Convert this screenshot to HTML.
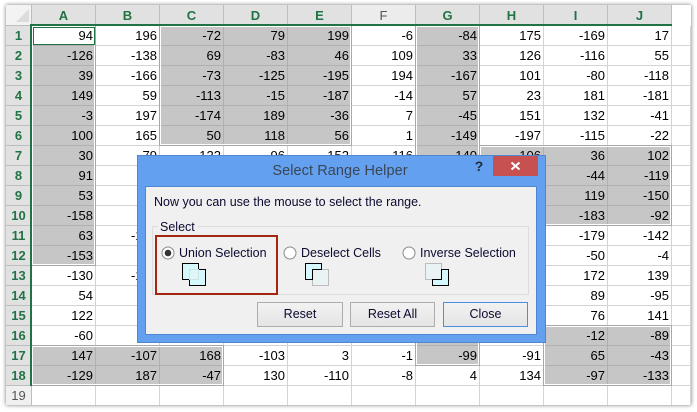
<!DOCTYPE html>
<html>
<head>
<meta charset="utf-8">
<style>
html,body{margin:0;padding:0;background:#fff;width:697px;height:412px;overflow:hidden}
body{position:relative;font-family:"Liberation Sans",sans-serif}
#sheet{position:absolute;left:6px;top:5px;width:685px;height:400px;background:#fff;box-shadow:0 0 4px rgba(0,0,0,.55);overflow:hidden}
table{position:absolute;left:0;top:0;border-collapse:separate;border-spacing:0;table-layout:fixed;width:685px;font-size:13px;color:#000}
td,th{box-sizing:border-box;height:20px;padding:0 2px 0 0;border-right:1px solid #d4d4d4;border-bottom:1px solid #d4d4d4;text-align:right;line-height:19px;font-weight:normal;overflow:hidden;white-space:nowrap}
tr.h th{height:21px;background:#e1e1e1;border-right:1px solid #bdbdbd;border-bottom:1px solid #bdbdbd;text-align:center;color:#217346;font-weight:bold;font-size:13px;padding:0}
tr.h th.n{background:#ececec;color:#555;font-weight:normal}
tr.h th.e{background:#fff;border:0}
th.r{background:#e1e1e1;border-right:1px solid #bdbdbd;border-bottom:1px solid #bdbdbd;text-align:center;color:#217346;font-weight:bold;padding:0}
th.x{background:#f0f0f0;color:#555;font-weight:normal}
td.g{background:#c6c6c6;border-color:#b0b0b0}
.sel{position:absolute;box-sizing:border-box;border:1px solid #a8a8a8;box-shadow:inset 0 0 0 1px #fff}
.abs{position:absolute}
#dlg{position:absolute;left:137px;top:155px;width:409px;height:188px;box-sizing:border-box;background:#64a0f0;border:1px solid #4f86cf}
#inner{position:absolute;left:145px;top:186px;width:392px;height:149px;box-sizing:border-box;background:#f0f0f0;border:1px solid #4f86cf}
.t{position:absolute;font-size:12.500px;line-height:16px;color:#0c0a30;white-space:nowrap}
.btn{position:absolute;top:302px;height:25px;box-sizing:border-box;border:1px solid #adadad;background:linear-gradient(#f2f2f2,#e4e4e4);font-size:12.500px;line-height:23px;text-align:center;color:#0c0a30}
</style>
</head>
<body>
<div id="sheet">
<table>
<colgroup><col style="width:26px"><col style="width:64px"><col style="width:64px"><col style="width:64px"><col style="width:64px"><col style="width:64px"><col style="width:64px"><col style="width:64px"><col style="width:64px"><col style="width:64px"><col style="width:64px"><col style="width:19px"></colgroup>
<tr class="h"><th style="background:#f3f3f3"></th><th>A</th><th>B</th><th>C</th><th>D</th><th>E</th><th class="n">F</th><th>G</th><th>H</th><th>I</th><th>J</th><th class="e"></th></tr>
<tr><th class="r">1</th><td class="g">94</td><td>196</td><td class="g">-72</td><td class="g">79</td><td class="g">199</td><td>-6</td><td class="g">-84</td><td>175</td><td>-169</td><td>17</td><td></td></tr>
<tr><th class="r">2</th><td class="g">-126</td><td>-138</td><td class="g">69</td><td class="g">-83</td><td class="g">46</td><td>109</td><td class="g">33</td><td>126</td><td>-116</td><td>55</td><td></td></tr>
<tr><th class="r">3</th><td class="g">39</td><td>-166</td><td class="g">-73</td><td class="g">-125</td><td class="g">-195</td><td>194</td><td class="g">-167</td><td>101</td><td>-80</td><td>-118</td><td></td></tr>
<tr><th class="r">4</th><td class="g">149</td><td>59</td><td class="g">-113</td><td class="g">-15</td><td class="g">-187</td><td>-14</td><td class="g">57</td><td>23</td><td>181</td><td>-181</td><td></td></tr>
<tr><th class="r">5</th><td class="g">-3</td><td>197</td><td class="g">-174</td><td class="g">189</td><td class="g">-36</td><td>7</td><td class="g">-45</td><td>151</td><td>132</td><td>-41</td><td></td></tr>
<tr><th class="r">6</th><td class="g">100</td><td>165</td><td class="g">50</td><td class="g">118</td><td class="g">56</td><td>1</td><td class="g">-149</td><td>-197</td><td>-115</td><td>-22</td><td></td></tr>
<tr><th class="r">7</th><td class="g">30</td><td>-79</td><td>-122</td><td>96</td><td>152</td><td>116</td><td class="g">-140</td><td class="g">-106</td><td class="g">36</td><td class="g">102</td><td></td></tr>
<tr><th class="r">8</th><td class="g">91</td><td></td><td></td><td></td><td></td><td></td><td class="g"></td><td class="g"></td><td class="g">-44</td><td class="g">-119</td><td></td></tr>
<tr><th class="r">9</th><td class="g">53</td><td></td><td></td><td></td><td></td><td></td><td class="g"></td><td class="g"></td><td class="g">119</td><td class="g">-150</td><td></td></tr>
<tr><th class="r">10</th><td class="g">-158</td><td></td><td></td><td></td><td></td><td></td><td class="g"></td><td class="g"></td><td class="g">-183</td><td class="g">-92</td><td></td></tr>
<tr><th class="r">11</th><td class="g">63</td><td>-100</td><td></td><td></td><td></td><td></td><td class="g"></td><td></td><td>-179</td><td>-142</td><td></td></tr>
<tr><th class="r">12</th><td class="g">-153</td><td></td><td></td><td></td><td></td><td></td><td class="g"></td><td></td><td>-50</td><td>-4</td><td></td></tr>
<tr><th class="r">13</th><td>-130</td><td>-100</td><td></td><td></td><td></td><td></td><td class="g"></td><td></td><td>172</td><td>139</td><td></td></tr>
<tr><th class="r">14</th><td>54</td><td></td><td></td><td></td><td></td><td></td><td class="g"></td><td></td><td>89</td><td>-95</td><td></td></tr>
<tr><th class="r">15</th><td>122</td><td></td><td></td><td></td><td></td><td></td><td class="g"></td><td></td><td>76</td><td>141</td><td></td></tr>
<tr><th class="r">16</th><td>-60</td><td></td><td></td><td></td><td></td><td></td><td class="g"></td><td></td><td class="g">-12</td><td class="g">-89</td><td></td></tr>
<tr><th class="r">17</th><td class="g">147</td><td class="g">-107</td><td class="g">168</td><td>-103</td><td>3</td><td>-1</td><td class="g">-99</td><td>-91</td><td class="g">65</td><td class="g">-43</td><td></td></tr>
<tr><th class="r">18</th><td class="g">-129</td><td class="g">187</td><td class="g">-47</td><td>130</td><td>-110</td><td>-8</td><td>4</td><td>134</td><td class="g">-97</td><td class="g">-133</td><td></td></tr>
<tr><th class="r x">19</th><td></td><td></td><td></td><td></td><td></td><td></td><td></td><td></td><td></td><td></td><td></td></tr>
</table>
</div>

<svg class="abs" style="left:6px;top:5px" width="26" height="20"><polygon points="10,17 23,17 23,4" fill="#dcdcdc"/></svg>

<div class="sel" style="left:31px;top:25px;width:65px;height:241px"></div>
<div class="sel" style="left:159px;top:25px;width:193px;height:121px"></div>
<div class="sel" style="left:415px;top:25px;width:65px;height:341px"></div>
<div class="sel" style="left:479px;top:145px;width:193px;height:81px"></div>
<div class="sel" style="left:543px;top:325px;width:129px;height:61px"></div>
<div class="sel" style="left:31px;top:345px;width:193px;height:41px"></div>

<div class="abs" style="left:33px;top:27px;width:62px;height:18px;box-sizing:border-box;background:#fff;border:1px solid #217346;font-size:13px;line-height:16px;text-align:right;padding-right:1px;color:#000">94</div>
<div class="abs" style="left:31px;top:24px;width:641px;height:2px;background:#217346"></div>
<div class="abs" style="left:30px;top:24px;width:2px;height:362px;background:#217346"></div>

<div id="dlg"></div>
<div id="inner"></div>
<div class="abs" style="left:493px;top:156px;width:45px;height:20px;background:#c75050"></div>
<svg class="abs" style="left:493px;top:156px" width="45" height="20"><path d="M18.500 6.500L26.500 13.500M26.500 6.500L18.500 13.500" stroke="#fff" stroke-width="2" fill="none"/></svg>
<div class="abs" style="left:473px;top:157px;width:12px;font-size:14px;font-weight:bold;line-height:18px;text-align:center;color:#222c3a">?</div>
<div class="abs" style="left:240px;top:162px;width:200px;text-align:center;font-size:14.500px;line-height:18px;color:#3a4654;letter-spacing:.08px;white-space:nowrap">Select Range Helper</div>

<div class="t" style="left:154px;top:194px">Now you can use the mouse to select the range.</div>

<div class="abs" style="left:152px;top:226px;width:377px;height:69px;box-sizing:border-box;border:1px solid #dcdcdc"></div>
<div class="t" style="left:158px;top:219px;background:#f0f0f0;padding:0 2px">Select</div>
<div class="abs" style="left:155px;top:235px;width:123px;height:60px;box-sizing:border-box;border:2px solid #a5260f"></div>

<svg class="abs" style="left:155px;top:240px" width="385" height="50">
<g fill="#fff" stroke="#8a8a8a"><circle cx="13" cy="13" r="6"/><circle cx="135" cy="13" r="6"/><circle cx="254" cy="13" r="6"/></g>
<circle cx="13" cy="13" r="3.300" fill="#333"/>
<!-- union -->
<path d="M27.500 23.500H43.500V29.500H50.500V45.500H34.500V39.500H27.500Z" fill="#d4f8fc" stroke="#000"/>
<rect x="34.500" y="29.500" width="9" height="10" fill="#e0f6f6" stroke="#c8e4e4"/>
<!-- deselect -->
<rect x="157.500" y="29.500" width="16" height="16" fill="#eaf3f3" stroke="#bcbcbc"/>
<path d="M150.500 23.500H166.500V29.500H157.500V39.500H150.500Z" fill="#d4f8fc" stroke="#000"/>
<!-- inverse -->
<rect x="270.500" y="23.500" width="16" height="16" fill="#eaf3f3" stroke="#bcbcbc"/>
<path d="M286.500 29.500H293.500V45.500H277.500V39.500H286.500Z" fill="#d4f8fc" stroke="#000"/>
</svg>

<div class="t" style="left:179px;top:245px">Union Selection</div>
<div class="t" style="left:301px;top:245px">Deselect Cells</div>
<div class="t" style="left:420px;top:245px">Inverse Selection</div>

<div class="btn" style="left:257px;width:86px">Reset</div>
<div class="btn" style="left:350px;width:85px">Reset All</div>
<div class="btn" style="left:443px;width:85px;border-color:#4a90e2">Close</div>
</body>
</html>
